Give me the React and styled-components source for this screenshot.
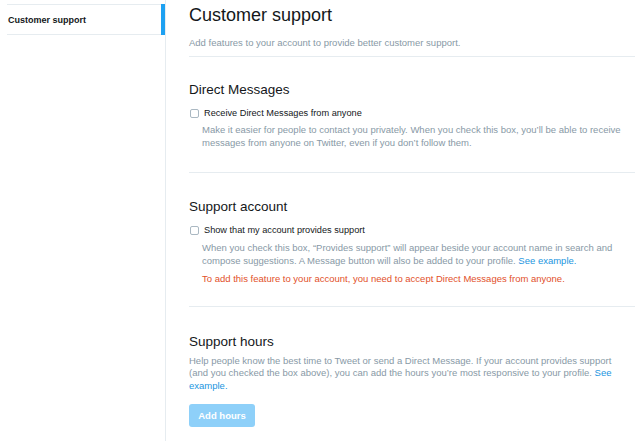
import styled, { createGlobalStyle } from 'styled-components';

const GlobalStyle = createGlobalStyle`
    html, body {
        margin: 0;
        padding: 0;
        background: #ffffff;
    }
    body {
        font-family: "Liberation Sans", Arial, Helvetica, sans-serif;
        color: #14171a;
    }
`;

const Page = styled.div`
    display: flex;
    min-height: 441px;
`;

const Sidebar = styled.nav`
    width: 165px;
    flex-shrink: 0;
    border-right: 1px solid #e6ecf0;
    padding-top: 4px;
`;

const NavItem = styled.div`
    display: flex;
    align-items: center;
    justify-content: space-between;
    height: 29px;
    margin-left: 7px;
    padding-left: 1px;
    border-top: 1px solid #e6ecf0;
    border-bottom: 1px solid #e6ecf0;
    font-size: 9px;
    font-weight: bold;
    color: #14171a;

    &::after {
        content: "";
        align-self: stretch;
        margin: -1px 0;
        width: 4px;
        background: ${({ active }) => (active ? '#1da1f2' : 'transparent')};
    }
`;

const Main = styled.main`
    flex: 1;
    padding: 4px 0 0 23px;
`;

const Header = styled.header`
    padding-bottom: 7px;
    border-bottom: 1px solid #e6ecf0;

    h1 {
        margin: 0;
        font-size: 18px;
        line-height: 22px;
        font-weight: normal;
        color: #14171a;
    }

    p {
        margin: 10px 0 0;
        font-size: 9.5px;
        line-height: 13px;
        color: #8899a6;
    }
`;

const Section = styled.section`
    padding: ${({ top }) => top}px 6px ${({ bottom }) => bottom}px 0;
    border-bottom: ${({ last }) => (last ? 'none' : '1px solid #e6ecf0')};
`;

const SectionTitle = styled.h2`
    margin: 0;
    font-size: 13.5px;
    line-height: 18px;
    font-weight: normal;
    color: #14171a;
`;

const CheckRow = styled.label`
    display: flex;
    align-items: center;
    gap: 5px;
    margin-top: 8px;
    font-size: 9.2px;
    line-height: 13px;
    color: #14171a;
`;

const Box = styled.span`
    width: 7px;
    height: 7px;
    margin-left: 1px;
    border: 1px solid #aab8c2;
    border-radius: 2px;
    background: #fff;
`;

const Help = styled.p`
    margin: ${({ gap }) => gap ?? 4}px 0 0 ${({ indent }) => (indent ? 13 : 0)}px;
    font-size: 9.5px;
    line-height: 12.5px;
    color: ${({ error }) => (error ? '#e2502a' : '#8899a6')};

    a {
        color: #1b95e0;
        text-decoration: none;
    }
`;

const Button = styled.button`
    margin-top: 12px;
    width: 66px;
    height: 23px;
    padding: 0;
    border: none;
    border-radius: 3px;
    background: #8ed0f9;
    color: #ffffff;
    font-family: inherit;
    font-size: 9.5px;
    font-weight: bold;
    cursor: default;
`;

export default function App() {
    return (
        <>
            <GlobalStyle />
            <Page>
                <Sidebar>
                    <NavItem active>Customer support</NavItem>
                </Sidebar>
                <Main>
                    <Header>
                        <h1>Customer support</h1>
                        <p>Add features to your account to provide better customer support.</p>
                    </Header>

                    <Section top={24} bottom={23}>
                        <SectionTitle>Direct Messages</SectionTitle>
                        <CheckRow>
                            <Box />
                            Receive Direct Messages from anyone
                        </CheckRow>
                        <Help indent gap={4}>
                            Make it easier for people to contact you privately. When you check this box, you’ll be able to receive
                            messages from anyone on Twitter, even if you don’t follow them.
                        </Help>
                    </Section>

                    <Section top={25} bottom={20}>
                        <SectionTitle>Support account</SectionTitle>
                        <CheckRow>
                            <Box />
                            Show that my account provides support
                        </CheckRow>
                        <Help indent gap={5}>
                            When you check this box, “Provides support” will appear beside your account name in search and
                            compose suggestions. A Message button will also be added to your profile. <a href="#">See example.</a>
                        </Help>
                        <Help indent error gap={6}>
                            To add this feature to your account, you need to accept Direct Messages from anyone.
                        </Help>
                    </Section>

                    <Section top={26} bottom={12} last>
                        <SectionTitle>Support hours</SectionTitle>
                        <Help gap={4}>
                            Help people know the best time to Tweet or send a Direct Message. If your account provides support
                            (and you checked the box above), you can add the hours you’re most responsive to your profile. <a href="#">See example.</a>
                        </Help>
                        <Button disabled>Add hours</Button>
                    </Section>
                </Main>
            </Page>
        </>
    );
}
